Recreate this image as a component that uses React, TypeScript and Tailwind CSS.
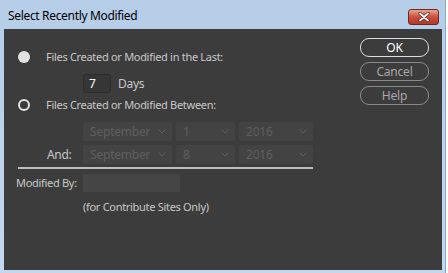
import React from "react";

const font = { fontFamily: '"Noto Sans", "Open Sans", sans-serif' };

function Chevron() {
  return (
    <svg width="8" height="5" viewBox="0 0 8 5" className="shrink-0">
      <path d="M0.5 0.5 L4 4 L7.5 0.5" fill="none" stroke="#5e5e5e" strokeWidth="1" />
    </svg>
  );
}

function Select({ value, w }: { value: string; w: string }) {
  return (
    <div className={`${w} h-[19px] bg-[#434343] rounded-[2px] flex items-center justify-between pl-[7px] pr-[6px] text-[#5f5f5f] text-[12px] tracking-[-0.2px]`}>
      <span>{value}</span>
      <Chevron />
    </div>
  );
}

function Btn({ label, primary }: { label: string; primary?: boolean }) {
  return (
    <div
      className={`w-[69px] h-[19px] rounded-[9px] border-[1.5px] flex items-center justify-center text-[12px] tracking-[-0.2px] ${
        primary ? "border-[#dedede] text-white" : "border-[#8a8a8a] text-[#a8a8a8]"
      }`}
    >
      {label}
    </div>
  );
}

export default function App() {
  return (
    <div className="w-[448px] h-[273px] bg-white" style={font}>
      <div className="w-[446px] h-[273px] bg-gradient-to-b from-[#b6cde8] to-[#c3d7ee] border-r border-[#8da6c3] flex flex-col">
        <div className="h-[29px] flex items-start justify-between">
          <div className="pl-[8px] pt-[9px] text-[12px] leading-[14px] text-black tracking-[-0.33px]">Select Recently Modified</div>
          <div className="mt-[9px] mr-[6px] w-[31px] h-[16px] rounded-[3px] border border-[#6b2a22] bg-gradient-to-b from-[#e8a493] via-[#c9503c] to-[#b33a28] flex items-center justify-center">
            <svg width="12" height="10" viewBox="0 0 12 10">
              <path d="M2 1.5 L10 8.5 M10 1.5 L2 8.5" stroke="#5a1a14" strokeWidth="3.2" strokeLinecap="round" />
              <path d="M2 1.5 L10 8.5 M10 1.5 L2 8.5" stroke="#ffffff" strokeWidth="1.8" strokeLinecap="round" />
            </svg>
          </div>
        </div>
        <div className="ml-[4px] w-[438px] h-[241px] bg-[#3c3c3c] flex">
          <div className="flex-1 flex flex-col text-[11px] text-[#c8c8c8] tracking-[-0.3px]">
            <div className="mt-[21px] h-[14px] flex items-center">
              <div className="ml-[14px] w-[12px] h-[12px] rounded-full bg-[#e2e2e2]" />
              <span className="ml-[16px]">Files Created or Modified in the Last:</span>
            </div>
            <div className="mt-[10px] h-[19px] flex items-center">
              <div className="ml-[79px] w-[28px] h-[19px] rounded-[2px] border border-[#2c2c2c] bg-[#363636] text-white text-[12px] pl-[5px] flex items-center">
                7
              </div>
              <span className="ml-[7px] text-[12px]">Days</span>
            </div>
            <div className="mt-[5px] h-[14px] flex items-center">
              <div className="ml-[14px] w-[12px] h-[12px] rounded-full border-[2px] border-[#e2e2e2]" />
              <span className="ml-[16px]">Files Created or Modified Between:</span>
            </div>
            <div className="mt-[10px] flex gap-[4px] ml-[79px]">
              <Select value="September" w="w-[89px]" />
              <Select value="1" w="w-[59px]" />
              <Select value="2016" w="w-[74px]" />
            </div>
            <div className="mt-[4px] flex items-center">
              <span className="ml-[43px] w-[36px] text-[12px]">And:</span>
              <div className="flex gap-[4px]">
                <Select value="September" w="w-[89px]" />
                <Select value="8" w="w-[59px]" />
                <Select value="2016" w="w-[74px]" />
              </div>
            </div>
            <div className="mt-[3px] ml-[14px] w-[295px] h-[2px] bg-[#bdbdbd]" />
            <div className="mt-[5px] h-[18px] flex items-center">
              <span className="ml-[12px] w-[67px]">Modified By:</span>
              <div className="w-[97px] h-[18px] bg-[#454545] rounded-[1px]" />
            </div>
            <div className="mt-[8px] h-[14px] flex items-center">
              <span className="ml-[79px]">(for Contribute Sites Only)</span>
            </div>
          </div>
          <div className="mt-[9px] mr-[13px] flex flex-col gap-[5px]">
            <Btn label="OK" primary />
            <Btn label="Cancel" />
            <Btn label="Help" />
          </div>
        </div>
      </div>
    </div>
  );
}
